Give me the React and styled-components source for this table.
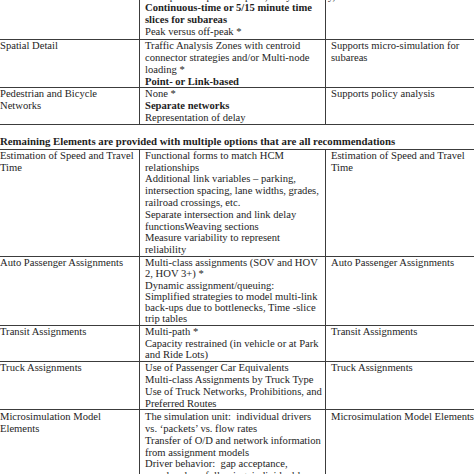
import React from "react";
import styled, { createGlobalStyle } from "styled-components";

const Global = createGlobalStyle`
  html, body { margin: 0; padding: 0; background: #ffffff; }
  body { width: 474px; height: 474px; overflow: hidden; }
`;

const Page = styled.div`
  width: 474px;
  height: 474px;
  overflow: hidden;
  background: #ffffff;
  font-family: "Liberation Serif", "Times New Roman", serif;
  font-size: 10.6px;
  line-height: 11.8px;
  color: #1e1e1e;
`;

const Sheet = styled.div`
  width: 520px;
  margin: -9.5px 0 0 -6px;
  display: flex;
  flex-direction: column;
`;

const Row = styled.div`
  display: grid;
  grid-template-columns: 145px 186px 1fr;
  border-bottom: 1px solid #3c3c3c;
  line-height: ${(p) => p.$lh || 11.8}px;
`;

const Cell = styled.div`
  border-left: 1px solid #3c3c3c;
  padding: ${(p) => p.$pt || 0}px 4px ${(p) => p.$pb || 0}px 5px;
  display: flex;
  flex-direction: column;
`;

const Line = styled.div`
  white-space: pre;
  font-weight: ${(p) => (p.$bold ? 700 : 400)};
`;

const SectionHeading = styled.div`
  padding: 10px 0 2px 6px;
  line-height: 12px;
  font-weight: 700;
  font-size: 10.8px;
  white-space: pre;
  border-bottom: 1px solid #3c3c3c;
`;

const rowsTop = [
  {
    pb: 1.5,
    left: [],
    mid: [
      { t: "Time periods: peak/off-peak, daily or hourly," },
      { t: "Continuous-time or 5/15 minute time\nslices for subareas", b: true },
      { t: "Peak versus off-peak *" },
    ],
    right: [],
  },
  {
    left: [{ t: "Spatial Detail" }],
    mid: [
      { t: "Traffic Analysis Zones with centroid\nconnector strategies and/or Multi-node\nloading *" },
      { t: "Point- or Link-based", b: true },
    ],
    right: [{ t: "Supports micro-simulation for\nsubareas" }],
  },
  {
    left: [{ t: "Pedestrian and Bicycle\nNetworks" }],
    mid: [
      { t: "None *" },
      { t: "Separate networks", b: true },
      { t: "Representation of delay" },
    ],
    right: [{ t: "Supports policy analysis" }],
  },
];

const rowsBottom = [
  {
    left: [{ t: "Estimation of Speed and Travel\nTime" }],
    mid: [
      { t: "Functional forms to match HCM\nrelationships" },
      { t: "Additional link variables \u2013 parking,\nintersection spacing, lane widths, grades,\nrailroad crossings, etc." },
      { t: "Separate intersection and link delay\nfunctionsWeaving sections" },
      { t: "Measure variability to represent\nreliability" },
    ],
    right: [{ t: "Estimation of Speed and Travel\nTime" }],
  },
  {
    lh: 11.3,
    left: [{ t: "Auto Passenger Assignments" }],
    mid: [
      { t: "Multi-class assignments (SOV and HOV\n2, HOV 3+) *" },
      { t: "Dynamic assignment/queuing:" },
      { t: "Simplified strategies to model multi-link\nback-ups due to bottlenecks, Time -slice\ntrip tables" },
    ],
    right: [{ t: "Auto Passenger Assignments" }],
  },
  {
    left: [{ t: "Transit Assignments" }],
    mid: [
      { t: "Multi-path *" },
      { t: "Capacity restrained (in vehicle or at Park\nand Ride Lots)" },
    ],
    right: [{ t: "Transit Assignments" }],
  },
  {
    left: [{ t: "Truck Assignments" }],
    mid: [
      { t: "Use of Passenger Car Equivalents" },
      { t: "Multi-class Assignments by Truck Type" },
      { t: "Use of Truck Networks, Prohibitions, and\nPreferred Routes" },
    ],
    right: [{ t: "Truck Assignments" }],
  },
  {
    pt: 1,
    left: [{ t: "Microsimulation Model\nElements" }],
    mid: [
      { t: "The simulation unit:  individual drivers\nvs. \u2018packets\u2019 vs. flow rates" },
      { t: "Transfer of O/D and network information\nfrom assignment models" },
      { t: "Driver behavior:  gap acceptance,\nspeed and car following, individual lane" },
    ],
    right: [{ t: "Microsimulation Model Elements" }],
  },
];

function Lines({ items }) {
  return items.map((it, i) => (
    <Line key={i} $bold={it.b}>
      {it.t}
    </Line>
  ));
}

function TableRow({ row }) {
  return (
    <Row $lh={row.lh}>
      <Cell $pb={row.pb} $pt={row.pt}>
        <Lines items={row.left} />
      </Cell>
      <Cell $pb={row.pb} $pt={row.pt}>
        <Lines items={row.mid} />
      </Cell>
      <Cell $pb={row.pb} $pt={row.pt}>
        <Lines items={row.right} />
      </Cell>
    </Row>
  );
}

export default function App() {
  return (
    <Page>
      <Global />
      <Sheet>
        {rowsTop.map((r, i) => (
          <TableRow key={i} row={r} />
        ))}
        <SectionHeading>
          Remaining Elements are provided with multiple options that are all recommendations
        </SectionHeading>
        {rowsBottom.map((r, i) => (
          <TableRow key={i} row={r} />
        ))}
      </Sheet>
    </Page>
  );
}
